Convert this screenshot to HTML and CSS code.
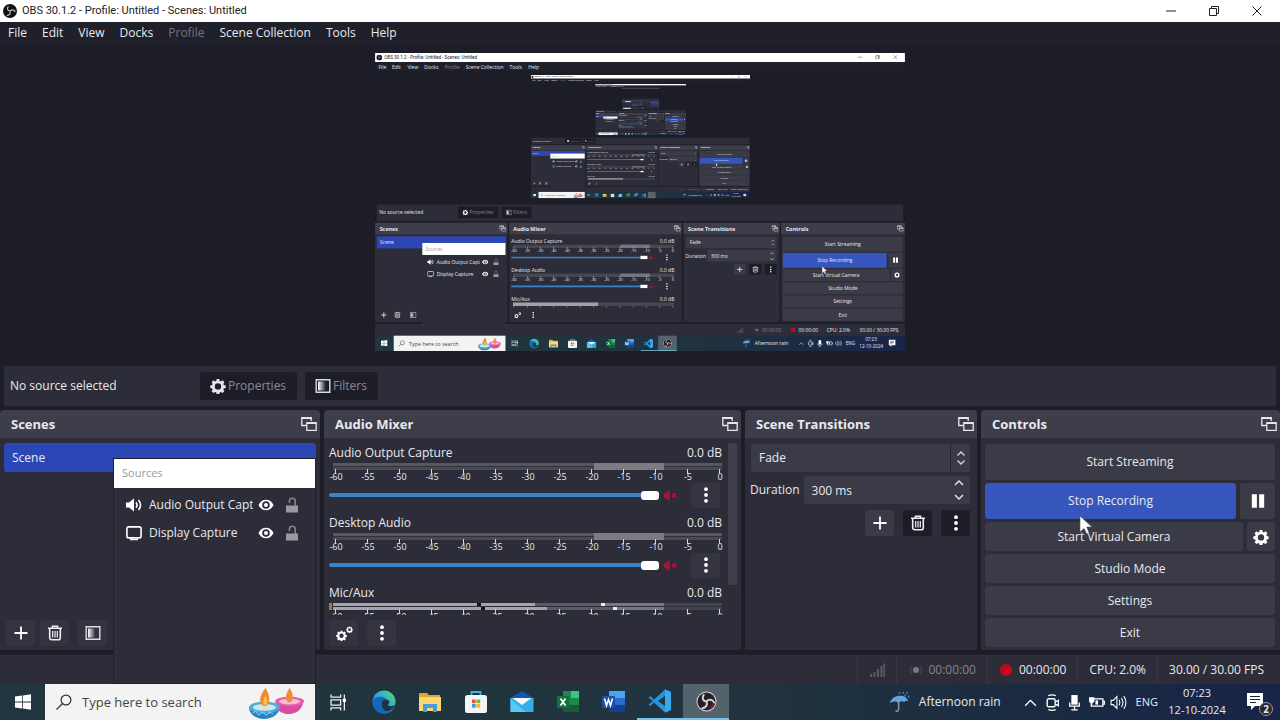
FILE: index.html
```html
<!DOCTYPE html>
<html lang="en">
<head>
<meta charset="utf-8">
<meta name="viewport" content="width=device-width, initial-scale=1">
<title>OBS 30.1.2 - Profile: Untitled - Scenes: Untitled</title>
<link rel="stylesheet" href="styles.css">
</head>
<body>
<svg class="sprite" aria-hidden="true">
  <defs>
    <linearGradient id="g-task" x1="0" x2="1"><stop offset="0" stop-color="#21363e"/><stop offset=".6" stop-color="#20333e"/><stop offset="1" stop-color="#182448"/></linearGradient>
    <linearGradient id="g-edge" x1="0" y1="1" x2="1" y2="0"><stop offset="0" stop-color="#0b5cb5"/><stop offset=".5" stop-color="#2aa9dc"/><stop offset="1" stop-color="#62dc63"/></linearGradient>
    <linearGradient id="g-fade" x1="0" x2="1"><stop offset="0" stop-color="#fff"/><stop offset="1" stop-color="#2c2d38"/></linearGradient>
  </defs>
  <symbol id="i-obs" viewBox="0 0 24 24"><circle cx="12" cy="12" r="11.5" fill="#d5d0d4"/><circle cx="12" cy="12" r="10.3" fill="#231f24"/><path d="M14 21.500q7-2 8-9l-4 3z" fill="#7a1d33"/><path d="M12 12c-4-.3-5.600-4-3.200-7.500M12 12c2.600-3 6.800-2.600 8.600 1M12 12c1.600 3.600-.6 7.200-4.700 7.600" fill="none" stroke="#d5d0d4" stroke-width="2.300" stroke-linecap="round"/></symbol>
  <symbol id="i-obs-dark" viewBox="0 0 24 24"><circle cx="12" cy="12" r="12" fill="#111"/><path d="M12 12c-4-.3-5.600-4-3.200-7.500M12 12c2.600-3 6.800-2.600 8.600 1M12 12c1.600 3.600-.6 7.200-4.700 7.600" fill="none" stroke="#bbb" stroke-width="2" stroke-linecap="round"/></symbol>
  <symbol id="i-min" viewBox="0 0 12 12"><path d="M1 6h10" stroke="#222"/></symbol>
  <symbol id="i-restore" viewBox="0 0 12 12"><path d="M1.500 3.500h7v7h-7zM3.500 3.500v-2h7v7h-2" fill="none" stroke="#222"/></symbol>
  <symbol id="i-close" viewBox="0 0 12 12"><path d="M1.500 1.500l9 9M10.500 1.500l-9 9" stroke="#222"/></symbol>
  <symbol id="i-gear" viewBox="0 0 16 16"><path fill="currentColor" fill-rule="evenodd" d="M6.700 1h2.600l.4 1.900 1.100.5 1.700-1.100 1.900 1.900-1.100 1.700.5 1.100 1.900.4v2.600l-1.900.4-.5 1.100 1.100 1.700-1.900 1.900-1.700-1.100-1.100.5-.4 1.900H6.700l-.4-1.900-1.100-.5-1.700 1.100-1.900-1.900 1.100-1.700-.5-1.100L.3 10V7.400L2.200 7l.5-1.100-1.100-1.700 1.900-1.900 1.700 1.100 1.100-.5zM8 5.200a3.200 3.200 0 100 6.400 3.200 3.200 0 000-6.400z"/></symbol>
  <symbol id="i-gears" viewBox="0 0 20 20"><use href="#i-gear" x="2" y="7" width="11" height="11"/><use href="#i-gear" x="12" y="3" width="7" height="7"/></symbol>
  <symbol id="i-filter" viewBox="0 0 16 16"><path d="M1.200 1.700h13.600v12.600H1.200z" fill="none" stroke="#dcdce2" stroke-width="1.400"/><path d="M3 3.500h7.500v9H3z" fill="url(#g-fade)"/></symbol>
  <symbol id="i-float" viewBox="0 0 16 16"><path d="M5 9.500H.8V1.700h9.400V5" fill="none" stroke="#e6e6ea" stroke-width="1.300"/><path d="M.5 2h10" stroke="#e6e6ea" stroke-width="2"/><path d="M5.800 7h9.400v7.300H5.800z" fill="none" stroke="#e6e6ea" stroke-width="1.300"/><path d="M5.500 7h10" stroke="#e6e6ea" stroke-width="2"/></symbol>
  <symbol id="i-plus" viewBox="0 0 16 16"><path d="M8 1.500v13M1.500 8h13" stroke="#fff" stroke-width="1.800"/></symbol>
  <symbol id="i-trash" viewBox="0 0 16 16"><path d="M1 3.200h14M5.500 3V1.300h5V3M2.700 4v8.700a2 2 0 002 2h6.600a2 2 0 002-2V4" fill="none" stroke="#eeeef2" stroke-width="1.600"/><path d="M5.700 6v6.500M8 6v6.500M10.300 6v6.500" stroke="#eeeef2" stroke-width="1.200"/></symbol>
  <symbol id="i-dots" viewBox="0 0 16 16"><circle cx="8" cy="2.200" r="1.900" fill="#fff"/><circle cx="8" cy="8" r="1.900" fill="#fff"/><circle cx="8" cy="13.800" r="1.900" fill="#fff"/></symbol>
  <symbol id="i-speaker" viewBox="0 0 16 16"><path d="M0 5.500h3L8 1.500v13l-5-4H0z" fill="#fff"/><path d="M10 5.200q2 2.800 0 5.600M12.500 3q4 5 0 10" fill="none" stroke="#fff" stroke-width="1.600"/></symbol>
  <symbol id="i-mute" viewBox="0 0 16 16"><path d="M1 5.500h2l4-4v13l-4-4H1z" fill="#b4103a"/><path d="M10 6l4 4M14 6l-4 4" stroke="#b4103a" stroke-width="2"/></symbol>
  <symbol id="i-display" viewBox="0 0 16 16"><rect x=".9" y="1.900" width="14.200" height="11" rx="2" fill="none" stroke="#fff" stroke-width="1.600"/><path d="M4 14.500h8" stroke="#fff" stroke-width="1.500"/></symbol>
  <symbol id="i-eye" viewBox="0 0 16 16"><path d="M.5 8C3.500 1 12.500 1 15.500 8 12.500 15 3.500 15 .5 8z" fill="#fff"/><circle cx="8" cy="8" r="3.800" fill="#2c2d38"/><circle cx="8" cy="8" r="2" fill="#fff"/></symbol>
  <symbol id="i-lock" viewBox="0 0 16 16"><path d="M2 8.500h12v7H2z" fill="#9b9aa1"/><path d="M11.200 9V4.200a2.900 2.900 0 00-5.800 0V6" fill="none" stroke="#85848c" stroke-width="1.600"/></symbol>
  <symbol id="i-pause" viewBox="0 0 16 16"><path d="M2.500 2h4.500v12H2.500zM9 2h4.500v12H9z" fill="#fff"/></symbol>
  <symbol id="i-updown" viewBox="0 0 10 16"><path d="M1.500 5.500L5 2l3.500 3.500M1.500 10.500L5 14l3.500-3.500" fill="none" stroke="#d5d5da" stroke-width="1.300"/></symbol>
  <symbol id="i-up" viewBox="0 0 10 8"><path d="M1 6l4-4 4 4" fill="none" stroke="#e0e0e5" stroke-width="1.500"/></symbol>
  <symbol id="i-down" viewBox="0 0 10 8"><path d="M1 2l4 4 4-4" fill="none" stroke="#e0e0e5" stroke-width="1.500"/></symbol>
  <symbol id="i-cursor" viewBox="0 0 14 20"><path d="M1 1v16l4-3.500L7.800 19l2.400-1.100L7.700 12H13z" fill="#fff" stroke="#555" stroke-width=".6"/></symbol>
  <symbol id="i-signal" viewBox="0 0 16 16"><path d="M1 12h2v3H1zM4.500 10h2v5h-2zM8 7h2v8H8zM11.500 4h2v11h-2zM14.500 1.500H16V15h-1.500z" fill="#5c5c66"/></symbol>
  <symbol id="i-live" viewBox="0 0 16 16"><circle cx="8" cy="8" r="3" fill="#7b7b84"/><path d="M4 3.500q-3 4.500 0 9M12 3.500q3 4.500 0 9" fill="none" stroke="#454550" stroke-width="1.300"/></symbol>
  <symbol id="i-win" viewBox="0 0 16 16"><path d="M0 2.500l7-1v6H0zM7.800 1.400L16 .2v7.300H7.800zM0 8.400h7v6.100l-7-1zM7.800 8.400H16v7.400l-8.200-1.200z" fill="#fff"/></symbol>
  <symbol id="i-find" viewBox="0 0 16 16"><circle cx="10" cy="6" r="4.900" fill="none" stroke="#333" stroke-width="1.200"/><path d="M6.500 9.500l-6 6" stroke="#333" stroke-width="1.200"/></symbol>
  <symbol id="i-diya" viewBox="0 0 60 34"><path d="M29 17c-1 16 26 16 28 0z" fill="#d94c9f"/><ellipse cx="43" cy="16" rx="15" ry="5" fill="#e85bab"/><ellipse cx="43" cy="16" rx="11" ry="3" fill="#f4bfd3"/><path d="M43 2c5 7 4 14 0 15-5-1-5-8 0-15z" fill="#f08c3c"/><path d="M1 22c1 16 30 16 32 0z" fill="#2b82bd"/><ellipse cx="17" cy="22" rx="16" ry="6" fill="#4caee0"/><ellipse cx="17" cy="22" rx="12" ry="3.500" fill="#d4e4df"/><path d="M18 2c6 9 5 18-1 19-7-3-5-11 1-19z" fill="#f08a2c"/><path d="M18 10c3 5 2 9 0 10-3-2-3-5 0-10z" fill="#fbc04f"/><path d="M5 28l3-2 3 4 4-3 4 3 4-3 3 2" fill="none" stroke="#9fdcf5"/></symbol>
  <symbol id="i-taskview" viewBox="0 0 16 16"><path d="M1 .5V3h9V.5M1 15.500V13h9v2.500M1 5.500h9v5H1z" fill="none" stroke="#eee" stroke-width="1.200"/><path d="M13.500.5v15" stroke="#eee" stroke-width="1.200"/><path d="M12 4.500h3v3h-3z" fill="#fff"/></symbol>
  <symbol id="i-edge" viewBox="0 0 24 24"><circle cx="12" cy="12" r="11.500" fill="url(#g-edge)"/><path d="M9 13c0-4 6-5 8-2 1 2-1 3-1 4 2 2 5 1 7 0-2 5-7 8-12 6-1-1-3-4-2-8z" fill="#20343e"/><path d="M1 11c2-5 11-6 14-1-4-1-6 2-5 6 1 5 6 6 9 5-7 6-18 0-18-10z" fill="#1467bd"/></symbol>
  <symbol id="i-folder" viewBox="0 0 24 24"><path d="M1 3h8l2 2h11v16H1z" fill="#e0a52e"/><path d="M1 7h22v14H1z" fill="#fbd770"/><path d="M5 22v-8h14v8h-4v-4H9v4z" fill="#4a9bd8"/></symbol>
  <symbol id="i-store" viewBox="0 0 24 24"><path d="M7.500 7V2h9v5" fill="none" stroke="#39b5e6" stroke-width="1.800"/><rect x="1" y="5" width="22" height="18" rx="2.500" fill="#f4f4f6"/><path d="M8 9.500h3.700v3.700H8z" fill="#e8513a"/><path d="M12.500 9.500h3.700v3.700h-3.700z" fill="#7bb72f"/><path d="M8 14h3.700v3.700H8z" fill="#2ea2e5"/><path d="M12.500 14h3.700v3.700h-3.700z" fill="#f5b823"/></symbol>
  <symbol id="i-mail" viewBox="0 0 24 24"><path d="M.5 8L12 1l11.500 7v4H.5z" fill="#1558a8"/><path d="M.5 8h23v14H.5z" fill="#35aee8"/><path d="M2.500 8h19L12 15z" fill="#f4f8fb"/><path d="M.5 22V9L16 22z" fill="#58c8f4"/></symbol>
  <symbol id="i-excel" viewBox="0 0 24 24"><path d="M7 1h16v21H7z" fill="#1c8a4c"/><path d="M15 1h8v7h-8z" fill="#3fc281"/><path d="M7 15h16v7H7z" fill="#185c37"/><path d="M1 6h12v12H1z" fill="#12723d"/><path d="M4.500 8.500l5 7M9.500 8.500l-5 7" stroke="#fff" stroke-width="1.800"/></symbol>
  <symbol id="i-word" viewBox="0 0 24 24"><path d="M7 1h16v21H7z" fill="#2b6bd0"/><path d="M7 1h16v7H7z" fill="#48a5ee"/><path d="M7 15h16v7H7z" fill="#173f91"/><path d="M0 6h13v12H0z" fill="#1b50ad"/><path d="M2.500 8.500l2 7 2-6 2 6 2-7" fill="none" stroke="#fff" stroke-width="1.600"/></symbol>
  <symbol id="i-code" viewBox="0 0 24 24"><path d="M17 .5l6 2.500v18l-6 2.500L6 13.500 2.500 17 .5 15.500 5 12 .5 8.500 2.500 7 6 10.500z" fill="#2593d8"/><path d="M17 7v10l-7-5z" fill="#20333e"/><path d="M17 .5l6 2.500v18l-6 2.500z" fill="#3aa9ec"/></symbol>
  <symbol id="i-rain" viewBox="0 0 24 24"><path d="M1 13C3 4 18 2 21 11q-3-1-4 1-4-2-7 1-3-3-9 0z" fill="#5aa7ea"/><path d="M10.500 8v12q-.5 3-3.500 1.500" fill="none" stroke="#8a98a8" stroke-width="1.600"/><path d="M12 1l-1 2M16 1l-1 2M20 1l-1 2M22 5l-1 2M18 4l-1 2" stroke="#4a94dc" stroke-width="1.300"/></symbol>
  <symbol id="i-chev" viewBox="0 0 16 16"><path d="M3 11l5-5 5 5" fill="none" stroke="#fff" stroke-width="1.300"/></symbol>
  <symbol id="i-meet" viewBox="0 0 16 16"><rect x="3" y="4.500" width="7.500" height="7.500" rx="1.500" fill="none" stroke="#fff" stroke-width="1.300"/><path d="M10.500 7.500l3-1.500v5l-3-1.500M4 1.500q4-1.500 7 0M4 14.700q4 1.300 7 0" fill="none" stroke="#fff" stroke-width="1.200"/></symbol>
  <symbol id="i-mic" viewBox="0 0 16 16"><path d="M5 1h6v9H5z" fill="#fff"/><path d="M3.500 8v3.500h9V8M8 11.500V15M5 15h6" fill="none" stroke="#fff" stroke-width="1.200"/></symbol>
  <symbol id="i-batt" viewBox="0 0 16 16"><path d="M5 4.500h9v7H4M14 7h1.500v2.500H14" fill="none" stroke="#fff" stroke-width="1.200"/><path d="M1 3h5v4L4 9v3H2.500V9L1 7z" fill="#fff"/><path d="M7 6h2.500v4H7z" fill="#fff"/></symbol>
  <symbol id="i-vol" viewBox="0 0 16 16"><path d="M1 6h2l3.500-3.500v11L3 10H1z" fill="none" stroke="#fff"/><path d="M8.500 5.500q1.500 2.500 0 5M10.700 3.700q3 4.300 0 8.600M13 2q4 6 0 12" fill="none" stroke="#fff"/></symbol>
  <symbol id="i-note" viewBox="0 0 24 24"><path d="M1 3h16v13H9l-4 4v-4H1z" fill="#fff"/><path d="M4 6.500h10M4 9.500h10M4 12.500h6" stroke="#1b2845" stroke-width="1.200"/></symbol>
</svg>

<header class="titlebar">
  <svg class="app-icon"><use href="#i-obs-dark"/></svg>
  <span class="title">OBS 30.1.2 - Profile: Untitled - Scenes: Untitled</span>
  <button class="win-btn" aria-label="Minimize"><svg><use href="#i-min"/></svg></button>
  <button class="win-btn" aria-label="Restore"><svg><use href="#i-restore"/></svg></button>
  <button class="win-btn" aria-label="Close"><svg><use href="#i-close"/></svg></button>
</header>

<nav class="menubar">
  <button>File</button><button>Edit</button><button>View</button><button>Docks</button><button disabled>Profile</button><button>Scene Collection</button><button>Tools</button><button>Help</button>
</nav>

<main class="workspace">
  <section class="preview" aria-label="Preview">
    <svg class="screen" viewBox="0 0 1280 720">
      <g id="desk">
        <rect width="1280" height="720" fill="#1d1d27"/>
        <rect width="1280" height="22" fill="#fff"/>
        <use href="#i-obs-dark" x="3" y="4" width="14" height="14"/>
        <text class="t-title" x="22" y="15">OBS 30.1.2 - Profile: Untitled - Scenes: Untitled</text>
        <use href="#i-min" x="1166" y="4" width="12" height="12"/><use href="#i-restore" x="1208" y="4" width="12" height="12"/><use href="#i-close" x="1251" y="4" width="12" height="12"/>
        <rect y="22" width="1280" height="22" fill="#20202a"/>
        <text x="8" y="38">File</text><text x="41" y="38">Edit</text><text x="78" y="38">View</text><text x="119" y="38">Docks</text><text class="t-dim" x="168" y="38">Profile</text><text x="219" y="38">Scene Collection</text><text x="325" y="38">Tools</text><text x="370" y="38">Help</text>
        <rect x="4" y="366" width="1272" height="40" fill="#2c2d38"/>
        <text x="10" y="390">No source selected</text>
        <path d="M200 371h98v28h-98zM306 371h72v28h-72z" fill="#1d1d27"/>
        <g color="#fff"><use href="#i-gear" x="211" y="378" width="14" height="14"/></g><use href="#i-filter" x="316" y="378" width="14" height="14"/>
        <text class="t-dim" x="228" y="390">Properties</text><text class="t-dim" x="333" y="390">Filters</text>
        <path d="M0 410h320v240H0zM324 410h417v240H324zM745 410h232v240H745zM981 410h299v240H981zM0 654h1280v30H0z" fill="#2c2d38"/>
        <path d="M0 410h320v28H0zM324 410h417v28H324zM745 410h232v28H745zM981 410h299v28H981z" fill="#3d3e49"/>
        <text class="t-bold" x="11" y="429">Scenes</text><text class="t-bold" x="334" y="429">Audio Mixer</text><text class="t-bold" x="756" y="429">Scene Transitions</text><text class="t-bold" x="992" y="429">Controls</text>
        <use href="#i-float" x="300" y="416" width="16" height="16"/><use href="#i-float" x="722" y="416" width="16" height="16"/><use href="#i-float" x="958" y="416" width="16" height="16"/><use href="#i-float" x="1261" y="416" width="16" height="16"/>
        <rect x="4" y="443" width="312" height="29" fill="#2b47b5"/><text x="12" y="462">Scene</text>
        <rect x="114" y="459" width="201" height="225" fill="#2c2d38"/><rect x="114" y="459" width="201" height="29" fill="#fff"/><text class="t-src" x="122" y="478">Sources</text>
        <use href="#i-speaker" x="126" y="497" width="16" height="16"/><text x="149" y="510">Audio Output Capt</text><use href="#i-eye" x="258" y="497" width="16" height="16"/><use href="#i-lock" x="284" y="497" width="16" height="16"/>
        <use href="#i-display" x="126" y="526" width="16" height="16"/><text x="149" y="538">Display Capture</text><use href="#i-eye" x="258" y="526" width="16" height="16"/><use href="#i-lock" x="284" y="526" width="16" height="16"/>
        <use href="#i-plus" x="13" y="625" width="16" height="16"/><use href="#i-trash" x="46" y="625" width="16" height="16"/><use href="#i-filter" x="84" y="625" width="16" height="16"/>
        <text x="329" y="458">Audio Output Capture</text><text x="329" y="528">Desktop Audio</text><text x="329" y="598">Mic/Aux</text>
        <text x="688" y="458">0.0 dB</text><text x="688" y="528">0.0 dB</text><text x="688" y="598">0.0 dB</text>
        <g id="desk-strip"><path d="M333 463h389v8H333z" fill="#474750"/><path d="M592 463h72v8h-72z" fill="#77777d"/><path d="M335 472h388" stroke="#ddd" stroke-width="6" stroke-dasharray="1 31"/><text class="t-tick" x="329" y="480">-60</text><text class="t-tick" x="361" y="480">-55</text><text class="t-tick" x="393" y="480">-50</text><text class="t-tick" x="425" y="480">-45</text><text class="t-tick" x="457" y="480">-40</text><text class="t-tick" x="489" y="480">-35</text><text class="t-tick" x="521" y="480">-30</text><text class="t-tick" x="553" y="480">-25</text><text class="t-tick" x="585" y="480">-20</text><text class="t-tick" x="618" y="480">-15</text><text class="t-tick" x="650" y="480">-10</text><text class="t-tick" x="684" y="480">-5</text><text class="t-tick" x="717" y="480">0</text><path d="M329 492h320v4H329z" fill="#3b82cc"/><rect x="641" y="490" width="17" height="8" fill="#fff"/><use href="#i-mute" x="662" y="487" width="15" height="15"/><use href="#i-dots" x="697" y="486" width="16" height="16"/></g>
        <use href="#desk-strip" y="70"/>
        <path d="M333 603h389v8H333z" fill="#474750"/><path d="M333 603h206v8H333z" fill="#a0a0a5"/><path d="M335 613h388" stroke="#ddd" stroke-width="4" stroke-dasharray="1 31"/>
        <g color="#fff"><use href="#i-gears" x="334" y="623" width="20" height="20"/></g><use href="#i-dots" x="374" y="625" width="16" height="16"/>
        <path d="M751 444h219v28H751zM803 476h167v28H803zM867 510h28v25h-28zM985 444h290v36H985zM1240 483h35v36h-35zM985 522h258v29H985zM1247 522h28v29h-28zM985 554h290v29H985zM985 586h290v29H985zM985 618h290v29H985z" fill="#3a3b46"/><path d="M904 510h29v25h-29zM942 510h28v25h-28z" fill="#1d1d27"/>
        <text x="760" y="462">Fade</text><text x="750" y="496">Duration</text><text x="811" y="495">300 ms</text>
        <use href="#i-updown" x="956" y="450" width="10" height="16"/><use href="#i-up" x="954" y="480" width="10" height="8"/><use href="#i-down" x="954" y="494" width="10" height="8"/>
        <use href="#i-plus" x="873" y="515" width="16" height="16"/><use href="#i-trash" x="911" y="515" width="16" height="16"/><use href="#i-dots" x="948" y="515" width="16" height="16"/>
        <rect x="985" y="483" width="251" height="36" fill="#3656bd"/>
        <g text-anchor="middle"><text x="1130" y="466">Start Streaming</text><text x="1111" y="505">Stop Recording</text><text x="1114" y="541">Start Virtual Camera</text><text x="1130" y="573">Studio Mode</text><text x="1130" y="605">Settings</text><text x="1130" y="637">Exit</text></g>
        <use href="#i-pause" x="1249" y="492" width="17" height="17"/><g color="#fff"><use href="#i-gear" x="1254" y="529" width="14" height="14"/></g>
        <use href="#i-cursor" x="1079" y="515" width="14" height="20"/>
        <use href="#i-signal" x="874" y="661" width="16" height="16"/><use href="#i-live" x="914" y="661" width="16" height="16"/><text class="t-dim" x="934" y="673">00:00:00</text><circle cx="1010" cy="669" r="6" fill="#c0091f"/><text x="1023" y="673">00:00:00</text><text x="1091" y="673">CPU: 2.0%</text><text x="1170" y="673">30.00 / 30.00 FPS</text>
        <rect y="684" width="1280" height="36" fill="url(#g-task)"/><rect x="45" y="683" width="270" height="37" fill="#f4f3f3"/>
        <use href="#i-win" x="14" y="693" width="16" height="16"/><use href="#i-find" x="56" y="694" width="16" height="16"/><text class="t-find" x="82" y="707">Type here to search</text><use href="#i-diya" x="248" y="686" width="58" height="33"/>
        <use href="#i-taskview" x="329" y="693" width="17" height="17"/><use href="#i-edge" x="372" y="690" width="24" height="24"/><use href="#i-folder" x="419" y="690" width="24" height="24"/><use href="#i-store" x="465" y="690" width="24" height="24"/><use href="#i-mail" x="511" y="690" width="24" height="24"/><use href="#i-excel" x="557" y="690" width="24" height="24"/><use href="#i-word" x="602" y="690" width="24" height="24"/><use href="#i-code" x="648" y="690" width="24" height="24"/>
        <rect x="684" y="683" width="45" height="37" fill="#53636c"/><use href="#i-obs" x="696" y="691" width="21" height="21"/><path d="M642 719h86" stroke="#79c3ee" stroke-width="2"/>
        <use href="#i-rain" x="887" y="690" width="22" height="22"/><text x="917" y="706">Afternoon rain</text><use href="#i-chev" x="1022" y="694" width="16" height="16"/><use href="#i-meet" x="1044" y="693" width="17" height="17"/><use href="#i-mic" x="1066" y="693" width="17" height="17"/><use href="#i-batt" x="1089" y="693" width="17" height="17"/><use href="#i-vol" x="1111" y="693" width="17" height="17"/><text class="t-clock" x="1137" y="706">ENG</text><text class="t-clock" x="1184" y="696">07:23</text><text class="t-clock" x="1170" y="713">12-10-2024</text><use href="#i-note" x="1240" y="690" width="24" height="24"/>
      </g>
      <svg class="inner" x="376" y="53" width="530" height="298" viewBox="0 0 1280 720"><use href="#desk"/>
        <svg class="inner" x="376" y="53" width="530" height="298" viewBox="0 0 1280 720"><use href="#desk"/>
          <svg class="inner" x="376" y="53" width="530" height="298" viewBox="0 0 1280 720"><use href="#desk"/></svg>
        </svg>
      </svg>
    </svg>
  </section>

  <section class="context">
    <span class="context-label">No source selected</span>
    <button class="btn-dark"><svg><use href="#i-gear"/></svg>Properties</button>
    <button class="btn-dark"><svg><use href="#i-filter"/></svg>Filters</button>
  </section>

  <div class="docks">
    <section class="dock">
      <h2>Scenes<button class="float-btn" aria-label="Undock Scenes"><svg><use href="#i-float"/></svg></button></h2>
      <div class="dock-body scenes">
        <button class="scene">Scene</button>
        <div class="tools">
          <button aria-label="Add scene"><svg><use href="#i-plus"/></svg></button>
          <button aria-label="Remove scene"><svg><use href="#i-trash"/></svg></button>
          <button class="spaced" aria-label="Scene filters"><svg><use href="#i-filter"/></svg></button>
        </div>
      </div>
    </section>

    <section class="dock">
      <h2>Audio Mixer<button class="float-btn" aria-label="Undock Audio Mixer"><svg><use href="#i-float"/></svg></button></h2>
      <div class="dock-body mixer">
        <div class="mixer-scroll">
          <div class="strips">
            <div class="strip">
              <div class="strip-head"><label for="v1">Audio Output Capture</label><span>0.0 dB</span></div>
              <div class="meter"></div>
              <div class="ticks"><i>-60</i><i>-55</i><i>-50</i><i>-45</i><i>-40</i><i>-35</i><i>-30</i><i>-25</i><i>-20</i><i>-15</i><i>-10</i><i>-5</i><i>0</i></div>
              <div class="strip-foot"><input id="v1" type="range" min="0" max="100" value="100"><button class="mute" aria-label="Unmute Audio Output Capture"><svg><use href="#i-mute"/></svg></button><button class="more" aria-label="Audio Output Capture options"><svg><use href="#i-dots"/></svg></button></div>
            </div>
            <div class="strip">
              <div class="strip-head"><label for="v2">Desktop Audio</label><span>0.0 dB</span></div>
              <div class="meter"></div>
              <div class="ticks"><i>-60</i><i>-55</i><i>-50</i><i>-45</i><i>-40</i><i>-35</i><i>-30</i><i>-25</i><i>-20</i><i>-15</i><i>-10</i><i>-5</i><i>0</i></div>
              <div class="strip-foot"><input id="v2" type="range" min="0" max="100" value="100"><button class="mute" aria-label="Unmute Desktop Audio"><svg><use href="#i-mute"/></svg></button><button class="more" aria-label="Desktop Audio options"><svg><use href="#i-dots"/></svg></button></div>
            </div>
            <div class="strip">
              <div class="strip-head"><span>Mic/Aux</span><span>0.0 dB</span></div>
              <div class="channels"><div class="meter live left"></div><div class="meter live right"></div></div>
              <div class="ticks"><i>-60</i><i>-55</i><i>-50</i><i>-45</i><i>-40</i><i>-35</i><i>-30</i><i>-25</i><i>-20</i><i>-15</i><i>-10</i><i>-5</i><i>0</i></div>
            </div>
          </div>
          <div class="scrollbar"></div>
        </div>
        <div class="tools">
          <button aria-label="Advanced audio properties"><svg class="wide"><use href="#i-gears"/></svg></button>
          <button class="spaced" aria-label="Mixer menu"><svg><use href="#i-dots"/></svg></button>
        </div>
      </div>
    </section>

    <section class="dock">
      <h2>Scene Transitions<button class="float-btn" aria-label="Undock Scene Transitions"><svg><use href="#i-float"/></svg></button></h2>
      <div class="dock-body transitions">
        <div class="field">
          <select aria-label="Transition"><option>Fade</option><option>Cut</option></select>
          <svg class="select-arrows"><use href="#i-updown"/></svg>
        </div>
        <div class="duration">
          <label for="dur">Duration</label>
          <div class="field">
            <input id="dur" type="text" value="300 ms">
            <div class="spin"><button aria-label="Increase"><svg><use href="#i-up"/></svg></button><button aria-label="Decrease"><svg><use href="#i-down"/></svg></button></div>
          </div>
        </div>
        <div class="tools end">
          <button aria-label="Add transition"><svg><use href="#i-plus"/></svg></button>
          <button class="dark" aria-label="Remove transition"><svg><use href="#i-trash"/></svg></button>
          <button class="dark" aria-label="Transition options"><svg><use href="#i-dots"/></svg></button>
        </div>
      </div>
    </section>

    <section class="dock">
      <h2>Controls<button class="float-btn" aria-label="Undock Controls"><svg><use href="#i-float"/></svg></button></h2>
      <div class="dock-body controls">
        <button class="tall">Start Streaming</button>
        <div class="pair"><button class="tall active">Stop Recording</button><button class="tall side" aria-label="Pause recording"><svg class="pause"><use href="#i-pause"/></svg></button></div>
        <div class="pair"><button>Start Virtual Camera</button><button class="side-small" aria-label="Virtual camera settings"><svg><use href="#i-gear"/></svg></button></div>
        <button>Studio Mode</button>
        <button>Settings</button>
        <button>Exit</button>
        <svg class="cursor" aria-hidden="true"><use href="#i-cursor"/></svg>
      </div>
    </section>

    <aside class="sources">
      <h2>Sources</h2>
      <ul>
        <li><svg><use href="#i-speaker"/></svg><span>Audio Output Capture</span><button aria-label="Hide Audio Output Capture"><svg><use href="#i-eye"/></svg></button><button aria-label="Lock Audio Output Capture"><svg><use href="#i-lock"/></svg></button></li>
        <li><svg><use href="#i-display"/></svg><span>Display Capture</span><button aria-label="Hide Display Capture"><svg><use href="#i-eye"/></svg></button><button aria-label="Lock Display Capture"><svg><use href="#i-lock"/></svg></button></li>
      </ul>
    </aside>
  </div>
</main>

<div class="status">
  <span><svg><use href="#i-signal"/></svg></span>
  <span class="idle"><svg><use href="#i-live"/></svg>00:00:00</span>
  <span><b class="rec-dot"></b>00:00:00</span>
  <span>CPU: 2.0%</span>
  <span class="fps">30.00 / 30.00 FPS</span>
</div>

<footer class="taskbar">
  <button class="start" aria-label="Start"><svg><use href="#i-win"/></svg></button>
  <label class="search"><svg class="find"><use href="#i-find"/></svg><input type="search" placeholder="Type here to search" aria-label="Search"><svg class="diya"><use href="#i-diya"/></svg></label>
  <div class="apps">
    <button aria-label="Task View"><svg class="small"><use href="#i-taskview"/></svg></button>
    <button aria-label="Edge"><svg><use href="#i-edge"/></svg></button>
    <button aria-label="File Explorer"><svg><use href="#i-folder"/></svg></button>
    <button aria-label="Store"><svg><use href="#i-store"/></svg></button>
    <button aria-label="Mail"><svg><use href="#i-mail"/></svg></button>
    <button aria-label="Excel"><svg><use href="#i-excel"/></svg></button>
    <button aria-label="Word"><svg><use href="#i-word"/></svg></button>
    <button class="open" aria-label="Visual Studio Code"><svg><use href="#i-code"/></svg></button>
    <button class="open current" aria-label="OBS Studio"><svg><use href="#i-obs"/></svg></button>
  </div>
  <button class="weather"><svg><use href="#i-rain"/></svg>Afternoon rain</button>
  <div class="tray">
    <button aria-label="Show hidden icons"><svg><use href="#i-chev"/></svg></button>
    <button aria-label="Meet Now"><svg><use href="#i-meet"/></svg></button>
    <button aria-label="Microphone"><svg><use href="#i-mic"/></svg></button>
    <button aria-label="Battery"><svg><use href="#i-batt"/></svg></button>
    <button aria-label="Volume"><svg><use href="#i-vol"/></svg></button>
  </div>
  <span class="lang">ENG</span>
  <div class="clock"><span>07:23</span><span>12-10-2024</span></div>
  <button class="notes" aria-label="2 notifications"><svg><use href="#i-note"/></svg><b>2</b></button>
</footer>
</body>
</html>
```
FILE: styles.css
```css
:root {
  --base: #1d1d27;
  --panel: #2c2d38;
  --raised: #3a3b46;
  --header: #3d3e49;
  --text: #e9e9ee;
}
* { box-sizing: border-box; }
body {
  margin: 0;
  min-height: 100vh;
  display: flex;
  flex-direction: column;
  background: var(--base);
  color: var(--text);
  font: 12px/18px "Open Sans", "Noto Sans", sans-serif;
  overflow: hidden;
}
button, input, select { font: inherit; color: inherit; border: 0; padding: 0; background: none; margin: 0; outline: 0; }
button { display: flex; align-items: center; justify-content: center; white-space: nowrap; }
svg { width: 16px; height: 16px; flex: none; display: block; }
h2, ul { margin: 0; padding: 0; font: inherit; list-style: none; }
.sprite { position: absolute; width: 0; height: 0; }

.titlebar { display: flex; align-items: center; height: 22px; background: #fff; color: #222; font-family: Roboto, sans-serif; font-size: 11px; }
.app-icon { width: 14px; height: 14px; margin: 0 5px 0 3px; }
.title { flex: 1; }
.win-btn { width: 43px; height: 20px; }
.win-btn svg { width: 12px; height: 12px; }
.win-btn:last-child { margin-right: 2px; }

.menubar { display: flex; height: 22px; padding-left: 8px; gap: 15px; background: #20202a; }
.menubar button:disabled { color: #74747c; }

.workspace { flex: 1; display: flex; flex-direction: column; min-height: 0; }
.preview { flex: 1 1 0; min-height: 120px; padding: 9px 0 15px; display: flex; justify-content: center; }
.screen { width: 100%; height: auto; min-height: 0; }
.screen .inner { width: 530px; height: 298px; }
.screen text { fill: #e9e9ee; font-size: 12px; }
.screen .t-title { fill: #222; font-family: Roboto, sans-serif; font-size: 11px; }
.screen .t-dim { fill: #85858e; }
.screen .t-bold { font-weight: 700; font-size: 13px; }
.screen .t-src { fill: #999; font-size: 11px; }
.screen .t-tick { font-size: 9px; }
.screen .t-find { fill: #444; font-size: 13px; }
.screen .t-clock { font-size: 11px; }

.context { display: flex; align-items: center; gap: 8px; height: 40px; margin: 0 4px; padding-left: 6px; background: var(--panel); }
.context-label { width: 182px; }
.btn-dark { height: 28px; padding: 0 11px 0 10px; gap: 2px; border-radius: 3px; background: var(--base); color: #8b8b94; }
.btn-dark svg { color: #e6e6ea; }

.docks { position: relative; display: grid; grid-template-columns: 320fr 417fr 232fr 299fr; gap: 4px; padding: 4px 0; }
.dock { display: flex; flex-direction: column; min-width: 0; background: var(--panel); border-radius: 4px 4px 0 0; }
.dock > h2 { display: flex; align-items: center; justify-content: space-between; height: 28px; padding: 0 3px 0 11px; background: var(--header); border-radius: 4px 4px 0 0; font-weight: 700; font-size: 13px; }
.dock-body { flex: 1; display: flex; flex-direction: column; padding: 5px 4px 4px; min-height: 0; }

.scene { justify-content: flex-start; height: 29px; padding-left: 8px; border-radius: 3px; background: #2b47b5; }
.tools { display: flex; gap: 5px; margin-top: auto; padding-left: 2px; }
.tools button { width: 29px; height: 26px; border-radius: 3px; background: #33343f; }
.tools .spaced { margin-left: 4px; }
.tools .wide { width: 20px; height: 20px; color: #fff; }
.tools .dark { background: var(--base); }
.tools.end { margin: 2px 0 0; gap: 9px; justify-content: flex-end; }
.tools.end button:first-child { background: var(--raised); }

.mixer-scroll { flex: 1 1 0; min-height: 0; display: flex; gap: 4px; overflow: hidden; margin-bottom: 5px; }
.strips { flex: 1; min-width: 0; padding: 1px 2px 0 1px; }
.strip { height: 70px; }
.strip-head { display: flex; justify-content: space-between; }
.meter { height: 7px; margin: 1px 0 0 4px; background: linear-gradient(90deg, transparent 67%, #7b7b81 67%, #7b7b81 85%, transparent 85%), linear-gradient(#57575f 0 3px, #2f2f39 3px 4px, #4a4a53 4px); }
.channels { border-left: 3px solid #868b2c; padding-left: 1px; margin-top: 1px; }
.meter.live { height: 3px; margin: 0; }
.meter.live + .live { margin-top: 1px; }
.live.left { background: linear-gradient(90deg, #a5a5a9 0 37%, #111 37% 38%, #a5a5a9 38% 52%, #5a5a61 52% 69%, #eee 69% 70%, #77777e 70% 85%, #42434c 85%); }
.live.right { background: linear-gradient(90deg, #a5a5a9 0 38%, #111 38% 39%, #a5a5a9 39% 55%, #5a5a61 55% 72%, #eee 72% 73%, #77777e 73% 85%, #42434c 85%); }
.ticks { display: flex; justify-content: space-between; margin-right: -5px; font-size: 9px; line-height: 13px; }
.ticks i { position: relative; width: 14px; font-style: normal; text-align: center; }
.ticks i::before { content: ""; position: absolute; left: 6px; top: -1px; width: 1px; height: 5px; background: #d5d5da; }
.strip-foot { display: flex; align-items: center; height: 24px; }
.strip-foot input { appearance: none; flex: 1; min-width: 0; height: 12px; }
.strip-foot input::-webkit-slider-runnable-track { height: 4px; border-radius: 2px; background: #3b82cc; }
.strip-foot input::-webkit-slider-thumb { appearance: none; width: 18px; height: 9px; margin-top: -2px; border-radius: 3px; background: #fff; }
.mute { width: 22px; }
.mute svg { width: 15px; height: 15px; }
.more { width: 29px; height: 25px; margin: 0 2px 0 10px; border-radius: 3px; background: #343540; }
.scrollbar { width: 9px; height: 142px; border-radius: 2px; background: #3f404b; }
.mixer .tools { padding-left: 1px; }

.transitions { padding: 6px 7px 4px 5px; gap: 4px; }
.field { flex: 1 1 auto; display: flex; align-items: center; height: 28px; background: var(--raised); border-radius: 3px; min-width: 0; }
.transitions > .field { flex: none; margin-left: 1px; }
.field select, .field input { appearance: none; flex: 1; min-width: 0; height: 28px; padding-left: 8px; }
.field select { border-right: 1px solid #22232d; }
.select-arrows { width: 10px; margin: 0 4px 0 5px; }
.duration { display: flex; align-items: center; gap: 4px; }
.spin { display: flex; flex-direction: column; gap: 6px; margin-right: 6px; }
.spin svg { width: 10px; height: 8px; }

.controls { position: relative; padding: 6px 5px 3px 4px; gap: 3px; }
.controls button { height: 29px; border-radius: 3px; background: var(--raised); }
.controls .tall { height: 36px; }
.pair { display: flex; gap: 4px; }
.pair button:first-child { flex: 1; }
.controls .active { background: #3656bd; }
.controls .side { width: 35px; }
.controls .side-small { width: 28px; color: #fff; }
.pause { width: 18px; height: 18px; }
.cursor { position: absolute; left: 98px; top: 77px; width: 14px; height: 20px; }

.sources { position: absolute; left: 113px; top: 52px; bottom: -30px; width: 203px; background: var(--panel); border: 1px solid #20202a; z-index: 2; }
.sources h2 { height: 29px; padding-left: 8px; line-height: 28px; background: #fff; color: #9a9a9a; font-size: 11px; }
.sources ul { padding: 3px 15px 0 12px; }
.sources li { display: flex; align-items: center; height: 28px; }
.sources li span { flex: 1; min-width: 0; margin: 0 5px 0 7px; white-space: nowrap; overflow: hidden; }
.sources li button + button { margin-left: 10px; }

.status { display: flex; justify-content: flex-end; height: 30px; background: var(--panel); border-top: 1px solid #22232d; }
.status span { display: flex; align-items: center; padding: 0 11px; border-left: 1px solid #383943; }
.status svg { margin-right: 4px; }
.status span:first-child svg { margin: 0; }
.status .idle { color: #85858e; }
.status .fps { padding-right: 16px; }
.rec-dot { width: 12px; height: 12px; margin: 0 7px 0 1px; border-radius: 50%; background: #c0091f; }

.taskbar { display: flex; align-items: center; height: 36px; background: linear-gradient(90deg, #21363e, #20333e 60%, #1a2b41 80%, #182448); }
.taskbar > * { height: 36px; }
.start { width: 45px; }
.search { position: relative; display: flex; align-items: center; width: 270px; padding: 0 9px 0 11px; gap: 10px; background: #f4f3f3; z-index: 3; }
.search input { flex: 1; min-width: 0; font-size: 13px; color: #444; }
.search input::placeholder { color: #444; opacity: 1; }
.diya { width: 58px; height: 33px; }
.apps { display: flex; flex: 1; }
.apps button { width: 46px; }
.apps svg { width: 24px; height: 24px; }
.apps .small { width: 17px; height: 17px; }
.apps .open { border-bottom: 2px solid #79c3ee; }
.apps .current { background: #53636c; }
.apps .current svg { width: 21px; height: 21px; }
.weather { gap: 8px; margin-right: 21px; }
.weather svg { width: 22px; height: 22px; }
.tray { display: flex; gap: 5px; }
.tray svg { width: 17px; height: 17px; }
.lang { margin-left: 9px; line-height: 36px; font-size: 11px; }
.clock { width: 78px; display: flex; flex-direction: column; align-items: center; font-size: 11px; line-height: 17px; }
.notes { position: relative; width: 44px; }
.notes svg { width: 24px; height: 24px; }
.notes b { position: absolute; right: 7px; bottom: 4px; width: 14px; height: 14px; border-radius: 50%; border: 1px solid #999; background: #26282e; font-size: 10px; line-height: 12px; }
```
